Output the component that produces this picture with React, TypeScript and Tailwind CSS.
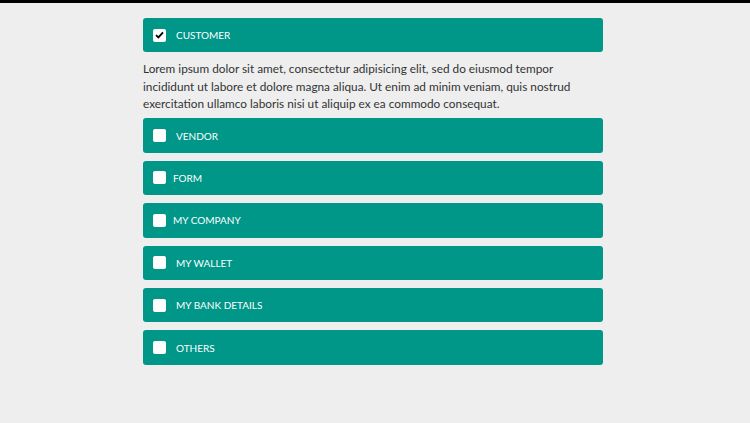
const items = [
  { label: "VENDOR", gap: "ml-[10px]" },
  { label: "FORM", gap: "ml-[7px]" },
  { label: "MY COMPANY", gap: "ml-[7px]" },
  { label: "MY WALLET", gap: "ml-[10px]" },
  { label: "MY BANK DETAILS", gap: "ml-[10px]" },
  { label: "OTHERS", gap: "ml-[10px]" },
];

function Box({ checked }: { checked?: boolean }) {
  return (
    <span className="flex h-[13px] w-[13px] shrink-0 items-center justify-center rounded-[2px] bg-white">
      {checked && (
        <svg width="9" height="8" viewBox="0 0 9 8" fill="none">
          <path d="M1 4.2 3.4 6.4 8 1.4" stroke="#000" strokeWidth="1.8" />
        </svg>
      )}
    </span>
  );
}

function Row({ label, gap, checked }: { label: string; gap: string; checked?: boolean }) {
  return (
    <div className="mb-[8px] flex h-[34.4px] items-center rounded-[3px] bg-[#009688] pl-[10px] text-white">
      <Box checked={checked} />
      <span className={`${gap} text-[10px] leading-none`}>{label}</span>
    </div>
  );
}

export default function App() {
  return (
    <div
      className="min-h-[423px] border-t-[3px] border-black bg-[#eeeeee]"
      style={{ fontFamily: "Lato, 'Open Sans', sans-serif" }}
    >
      <div className="ml-[143px] w-[460px] pt-[15px]">
        <Row label="CUSTOMER" gap="ml-[10px]" checked />
        <p className="mb-[5.5px] text-[11.8px] leading-[17.5px] text-[#333]">
          Lorem ipsum dolor sit amet, consectetur adipisicing elit, sed do eiusmod tempor incididunt ut labore et dolore
          magna aliqua. Ut enim ad minim veniam, quis nostrud exercitation ullamco laboris nisi ut aliquip ex ea commodo
          consequat.
        </p>
        {items.map((it) => (
          <Row key={it.label} label={it.label} gap={it.gap} />
        ))}
      </div>
    </div>
  );
}
